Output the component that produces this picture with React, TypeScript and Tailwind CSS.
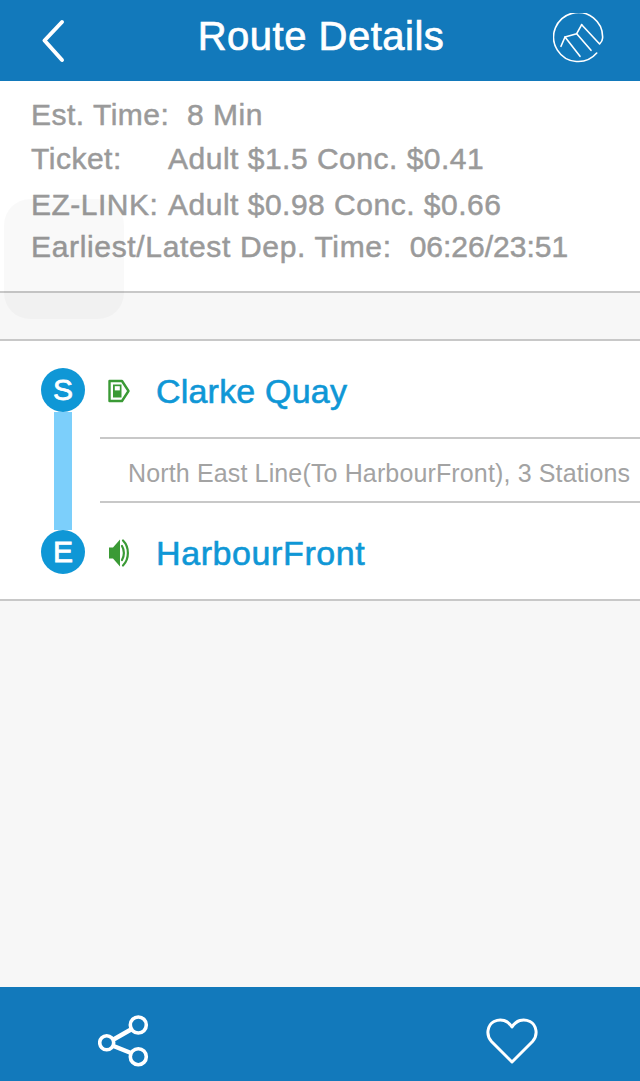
const fontStack = "font-['Liberation_Sans',Arial,sans-serif]"

function LogoIcon() {
  return (
    <svg width="52" height="52" viewBox="0 0 52 52" fill="none" stroke="white" strokeWidth="1.6" strokeLinecap="round" strokeLinejoin="round">
      <path d="M28.7 11.7 L46.6 31 C48.6 29 49.6 27.5 49.6 25 A24.5 24.5 0 1 0 43.7 40" />
      <path d="M8 33.3 L12 24 L23.7 20.7 L28.7 11.7" />
      <path d="M12 24 L27 43.3" />
      <path d="M23.7 20.7 L38 37.3" />
    </svg>
  )
}

function ShareIcon() {
  return (
    <svg width="52" height="52" viewBox="0 0 52 52" fill="none" stroke="white" strokeWidth="3.6">
      <circle cx="40.3" cy="10" r="8" />
      <circle cx="40.3" cy="41.7" r="8" />
      <circle cx="8.7" cy="27.7" r="7" />
      <path d="M15.5 24.5 L33 14.5 M15.5 31 L33 38" strokeWidth="4.5" />
    </svg>
  )
}

function HeartIcon() {
  return (
    <svg width="52" height="48" viewBox="0 0 52 48" fill="none" stroke="white" strokeWidth="3" strokeLinejoin="round">
      <path d="M26 45 L5.5 24.5 C-0.5 18 1.5 8 8 4.5 C15 1 22 3.5 26 10 C30 3.5 37 1 44 4.5 C50.5 8 52.5 18 46.5 24.5 Z" />
    </svg>
  )
}

function PumpTagIcon() {
  return (
    <svg width="22" height="24" viewBox="0 0 22 24" fill="none">
      <path d="M1.5 2 H14 L20.5 12 L14 22 H1.5 Z" stroke="#3a9a35" strokeWidth="2.4" strokeLinejoin="round" />
      <rect x="5" y="5.5" width="8.5" height="13" fill="#3a9a35" />
      <rect x="6.8" y="7.2" width="5" height="4.2" fill="#ffffff" />
    </svg>
  )
}

function SpeakerIcon() {
  return (
    <svg width="22" height="30" viewBox="0 0 22 30" fill="none">
      <path d="M1 9.5 H5 L12 1.5 V28.5 L5 20.5 H1 Z" fill="#3a9a35" />
      <path d="M14 8 C16.5 12 16.5 18 14 22" stroke="#3a9a35" strokeWidth="2.2" strokeLinecap="round" />
      <path d="M15 2.5 C21.5 9 21.5 21 15 27.5" stroke="#3a9a35" strokeWidth="2.2" strokeLinecap="round" />
    </svg>
  )
}

function StationDot({ letter }: { letter: string }) {
  return (
    <div className="w-[44px] h-[44px] shrink-0 rounded-full bg-[#0f97d6] flex items-center justify-center text-white text-[30px] leading-none [-webkit-text-stroke:0.8px_white]">
      {letter}
    </div>
  )
}

export default function App() {
  return (
    <div className={`${fontStack} relative w-[640px] h-[1081px] flex flex-col bg-[#f7f7f7] overflow-hidden`}>
      <header className="h-[81px] shrink-0 bg-[#1279bb] flex items-center justify-between pl-[41px] pr-[35px] text-white">
        <svg width="24" height="44" viewBox="0 0 24 44" fill="none" stroke="white" strokeWidth="4" strokeLinecap="round" strokeLinejoin="round">
          <path d="M21 3 L3.5 21.5 L21 41" />
        </svg>
        <h1 className="text-[40px] leading-none font-normal tracking-[0.5px] [-webkit-text-stroke:0.7px_white] -mt-[9px] ml-[24px]">Route Details</h1>
        <div className="-mt-[4px]"><LogoIcon /></div>
      </header>

      <section className="h-[212px] shrink-0 bg-white border-b-2 border-[#c8c8c8] pl-[31px] pt-[11px] text-[#9a9a9a] text-[30px] tracking-[0.5px] leading-[46px] [-webkit-text-stroke:0.5px_#9a9a9a]">
        <div className="h-[44px] whitespace-pre">Est. Time:  8 Min</div>
        <div className="h-[46px] flex">
          <span className="w-[137px]">Ticket:</span>
          <span>Adult $1.5 Conc. $0.41</span>
        </div>
        <div className="h-[42px] flex">
          <span className="w-[137px]">EZ-LINK:</span>
          <span>Adult $0.98 Conc. $0.66</span>
        </div>
        <div className="whitespace-pre">
          <span className="tracking-[0.66px]">Earliest/Latest Dep. Time:  </span>
          <span className="tracking-[0px]">06:26/23:51</span>
        </div>
      </section>

      <div className="h-[46px] shrink-0" />

      <section className="h-[262px] shrink-0 bg-white border-y-2 border-[#c8c8c8] flex">
        <div className="w-[100px] shrink-0 pl-[41px] pt-[27px] flex flex-col">
          <StationDot letter="S" />
          <div className="w-[18px] h-[118px] ml-[13px] bg-[#7ccffb]" />
          <StationDot letter="E" />
        </div>
        <div className="flex-1 flex flex-col">
          <div className="h-[98px] shrink-0 flex items-center border-b-2 border-[#c8c8c8] pt-[3px]">
            <div className="w-[56px] pl-[8px] flex items-center"><PumpTagIcon /></div>
            <span className="text-[34px] tracking-[0.2px] leading-none text-[#0f97d6] [-webkit-text-stroke:0.6px_#0f97d6]">Clarke Quay</span>
          </div>
          <div className="h-[64px] shrink-0 flex items-center border-b-2 border-[#c8c8c8] pl-[28px] pt-[7px] text-[25px] tracking-[0.14px] text-[#a3a3a3] whitespace-nowrap">
            North East Line(To HarbourFront), 3 Stations
          </div>
          <div className="flex-1 flex items-center pt-[3px]">
            <div className="w-[56px] pl-[8px] flex items-center"><SpeakerIcon /></div>
            <span className="text-[34px] tracking-[0.6px] leading-none text-[#0f97d6] [-webkit-text-stroke:0.6px_#0f97d6]">HarbourFront</span>
          </div>
        </div>
      </section>

      <div className="flex-1" />

      <footer className="h-[94px] shrink-0 bg-[#1279bb] flex items-center justify-between pl-[98px] pr-[102px] pt-[14px]">
        <ShareIcon />
        <HeartIcon />
      </footer>

      {/* assistive touch ghost button */}
      <div className="absolute left-[4px] top-[199px] w-[120px] h-[120px] rounded-[26px] bg-black/[0.025]" />
    </div>
  )
}
